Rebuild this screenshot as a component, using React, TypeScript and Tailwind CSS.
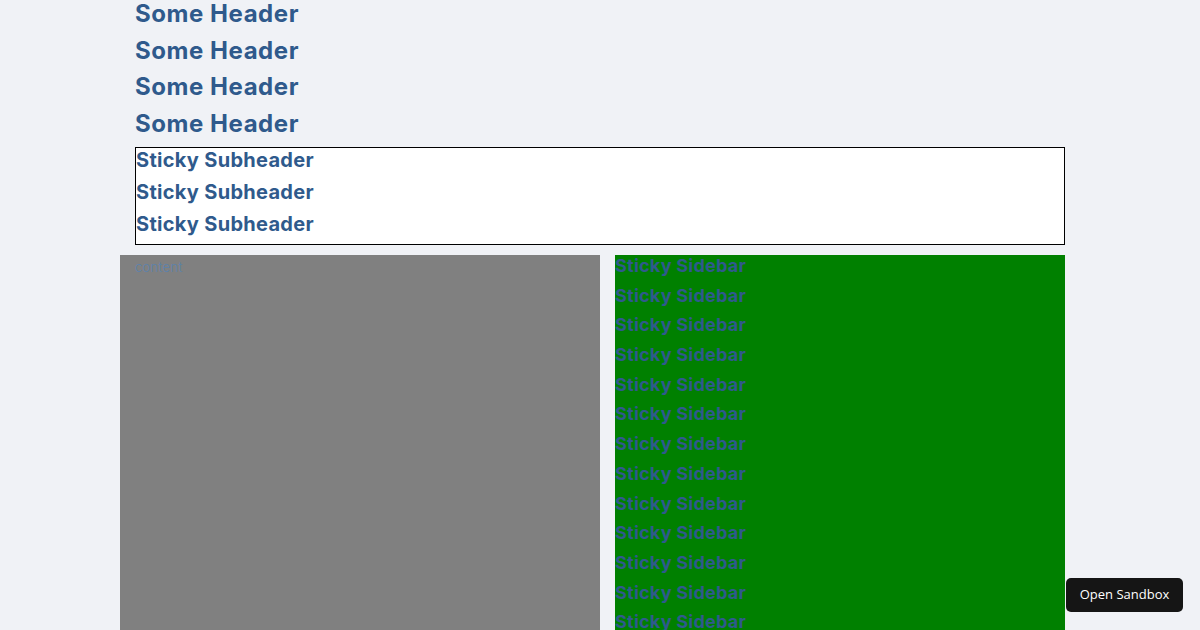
export default function App() {
  const headers = Array.from({ length: 4 });
  const subs = Array.from({ length: 3 });
  const side = Array.from({ length: 13 });
  return (
    <div className="relative h-[630px] overflow-hidden bg-[#f0f2f6] font-['Inter',sans-serif] text-[#2f5a8c]">
      <div className="mx-auto w-[960px] px-[15px]">
        <div>
          {headers.map((_, i) => (
            <h2 key={i} className="h-[36.5px] text-[24px] font-bold leading-[28px] tracking-[0.55px]">
              Some Header
            </h2>
          ))}
        </div>
        <div className="mt-[1px] h-[98px] border border-black bg-white">
          {subs.map((_, i) => (
            <h3 key={i} className="h-[32px] text-[20px] font-bold leading-[25px] tracking-[0.3px]">
              Sticky Subheader
            </h3>
          ))}
        </div>
        <div className="-mx-[15px] mt-[10px] flex">
          <div className="h-[400px] w-[480px] bg-[#808080] px-[15px]">
            <p className="pt-[3px] text-[13px] font-light tracking-[0.3px] text-[#5b82ad]">content</p>
          </div>
          <div className="w-[480px] px-[15px]">
            <div className="bg-[#008000]">
              {side.map((_, i) => (
                <p key={i} className="h-[29.7px] text-[18px] font-bold leading-[22px] tracking-[0.25px]">
                  Sticky Sidebar
                </p>
              ))}
            </div>
          </div>
        </div>
      </div>
      <div className="absolute left-[1066px] top-[578px] flex h-[34px] w-[117px] items-center justify-center rounded-[5px] bg-[#151515] font-['Open_Sans',sans-serif] text-[13px] font-medium text-white">
        Open Sandbox
      </div>
    </div>
  );
}
